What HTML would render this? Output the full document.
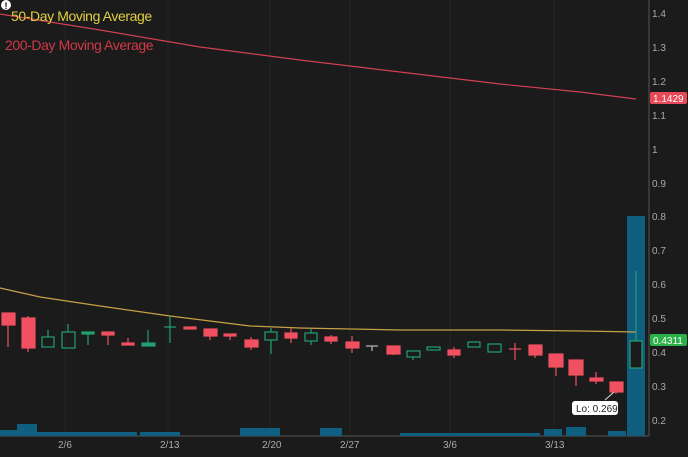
<!DOCTYPE html>
<html><head><style>
body{margin:0;background:#1b1b1b;width:688px;height:452px;overflow:hidden;font-family:"Liberation Sans",sans-serif}
svg text{font-family:"Liberation Sans",sans-serif}
</style></head><body>
<svg width="688" height="452" viewBox="0 0 688 452" xmlns="http://www.w3.org/2000/svg">
<rect width="688" height="452" fill="#1b1b1b"/>
<g stroke="#262626" stroke-width="1">
<line x1="65" y1="0" x2="65" y2="436"/><line x1="168" y1="0" x2="168" y2="436"/><line x1="270" y1="0" x2="270" y2="436"/><line x1="350" y1="0" x2="350" y2="436"/><line x1="450" y1="0" x2="450" y2="436"/><line x1="554" y1="0" x2="554" y2="436"/>
</g>
<line x1="649" y1="0" x2="649" y2="436" stroke="#555"/>
<line x1="0" y1="436" x2="649" y2="436" stroke="#555"/>
<!-- volume -->
<g fill="#0e5f80">
<rect x="0" y="430" width="17" height="6"/><rect x="17" y="424" width="20" height="12"/><rect x="37" y="432" width="100" height="4"/><rect x="140" y="432" width="40" height="4"/><rect x="240" y="428" width="40" height="8"/><rect x="320" y="428" width="22" height="8"/><rect x="400" y="433" width="140" height="3"/><rect x="544" y="429" width="18" height="7"/><rect x="566" y="427" width="20" height="9"/><rect x="608" y="431" width="18" height="5"/>
<rect x="627" y="216" width="18" height="220" fill="#0f5e80"/>
</g>
<!-- MAs -->
<polyline fill="none" stroke="#d04050" stroke-width="1.2" points="0,14 100,30 200,47 300,60 400,72 500,84 580,92 636,99"/>
<polyline fill="none" stroke="#c8a048" stroke-width="1.2" points="0,288 40,297 100,306 170,316 250,326 300,328 400,330 500,330 580,331 636,332"/>
<!-- candles -->
<g stroke-width="1.2">
<g stroke="#f05060" fill="#f05060">
<line x1="8" y1="313" x2="8" y2="347"/><rect x="2" y="313" width="13" height="12"/>
<line x1="28" y1="316" x2="28" y2="352"/><rect x="22" y="318" width="13" height="30"/>
<line x1="108" y1="332" x2="108" y2="345"/><rect x="102" y="332" width="12" height="3"/>
<line x1="128" y1="338" x2="128" y2="345"/><rect x="122" y="343" width="12" height="2"/>
<rect x="184" y="327" width="12" height="2"/>
<line x1="210" y1="329" x2="210" y2="340"/><rect x="204" y="329" width="13" height="7"/>
<line x1="230" y1="334" x2="230" y2="340"/><rect x="224" y="334" width="12" height="2"/>
<line x1="251" y1="337" x2="251" y2="350"/><rect x="245" y="340" width="13" height="7"/>
<line x1="291" y1="328" x2="291" y2="343"/><rect x="285" y="333" width="12" height="5"/>
<line x1="331" y1="335" x2="331" y2="344"/><rect x="325" y="337" width="12" height="4"/>
<line x1="352" y1="336" x2="352" y2="353"/><rect x="346" y="342" width="13" height="6"/>
<line x1="393" y1="346" x2="393" y2="355"/><rect x="387" y="346" width="13" height="8"/>
<line x1="454" y1="347" x2="454" y2="358"/><rect x="448" y="350" width="12" height="5"/>
<line x1="515" y1="343" x2="515" y2="360"/><line x1="509" y1="349" x2="521" y2="349"/>
<line x1="535" y1="345" x2="535" y2="358"/><rect x="529" y="345" width="13" height="10"/>
<line x1="556" y1="354" x2="556" y2="376"/><rect x="549" y="354" width="14" height="13"/>
<line x1="576" y1="360" x2="576" y2="386"/><rect x="569" y="360" width="14" height="15"/>
<line x1="596" y1="372" x2="596" y2="384"/><rect x="590" y="378" width="13" height="3"/>
<line x1="616" y1="382" x2="616" y2="394"/><rect x="610" y="382" width="13" height="10"/>
</g>
<g stroke="#22a070" fill="none">
<line x1="48" y1="330" x2="48" y2="337"/><rect x="42" y="337" width="12" height="10"/>
<line x1="68" y1="324" x2="68" y2="332"/><rect x="62" y="332" width="13" height="16"/>
<line x1="88" y1="334" x2="88" y2="345"/><rect x="82" y="332" width="12" height="2" fill="#22a070"/>
<line x1="148" y1="330" x2="148" y2="343"/><rect x="142" y="343" width="13" height="3" fill="#22a070"/>
<line x1="170" y1="316" x2="170" y2="343"/><line x1="164" y1="327" x2="176" y2="327"/>
<line x1="271" y1="328" x2="271" y2="354"/><rect x="265" y="332" width="12" height="8" fill="#1b1b1b"/>
<line x1="311" y1="329" x2="311" y2="345"/><rect x="305" y="333" width="12" height="8" fill="#1b1b1b"/>
<line x1="413" y1="351" x2="413" y2="360"/><rect x="407" y="351" width="13" height="6" fill="#1b1b1b"/>
<rect x="427" y="347" width="13" height="3"/>
<rect x="468" y="342" width="12" height="5"/>
<rect x="488" y="344" width="13" height="8"/>
<line x1="636" y1="271" x2="636" y2="341"/><rect x="630" y="341" width="12" height="27" fill="#1b1b1b"/>
</g>
<line x1="366" y1="346" x2="378" y2="346" stroke="#bbb"/><line x1="372" y1="346" x2="372" y2="351" stroke="#bbb"/>
</g>
<!-- axis labels -->
<g fill="#aaa" font-size="10">
<text x="652" y="17">1.4</text><text x="652" y="51">1.3</text><text x="652" y="85">1.2</text><text x="652" y="119">1.1</text><text x="652" y="153">1</text><text x="652" y="187">0.9</text><text x="652" y="220">0.8</text><text x="652" y="254">0.7</text><text x="652" y="288">0.6</text><text x="652" y="322">0.5</text><text x="652" y="356">0.4</text><text x="652" y="390">0.3</text><text x="652" y="424">0.2</text>
<text x="58" y="448">2/6</text><text x="160" y="448">2/13</text><text x="262" y="448">2/20</text><text x="340" y="448">2/27</text><text x="443" y="448">3/6</text><text x="545" y="448">3/13</text>
</g>
<rect x="650" y="92" width="37" height="12" rx="2" fill="#e84858"/><text x="653" y="102" font-size="10" fill="#fff">1.1429</text>
<rect x="650" y="334" width="37" height="12" rx="2" fill="#2cb048"/><text x="653" y="344" font-size="10" fill="#fff">0.4311</text>
<line x1="605" y1="400" x2="614" y2="392" stroke="#ddd"/>
<rect x="572" y="401" width="46" height="14" rx="3" fill="#fff"/><text x="576" y="412" font-size="10" fill="#222">Lo: 0.269</text>
<circle cx="6" cy="5" r="5" fill="#fff"/><text x="4.5" y="9" font-size="9" font-weight="bold" fill="#000">!</text>
<text x="11" y="21" font-size="14" fill="#e0d040" letter-spacing="-0.4">50-Day Moving Average</text>
<text x="5" y="50" font-size="14" fill="#d03848" letter-spacing="-0.4">200-Day Moving Average</text>
</svg>
</body></html>
